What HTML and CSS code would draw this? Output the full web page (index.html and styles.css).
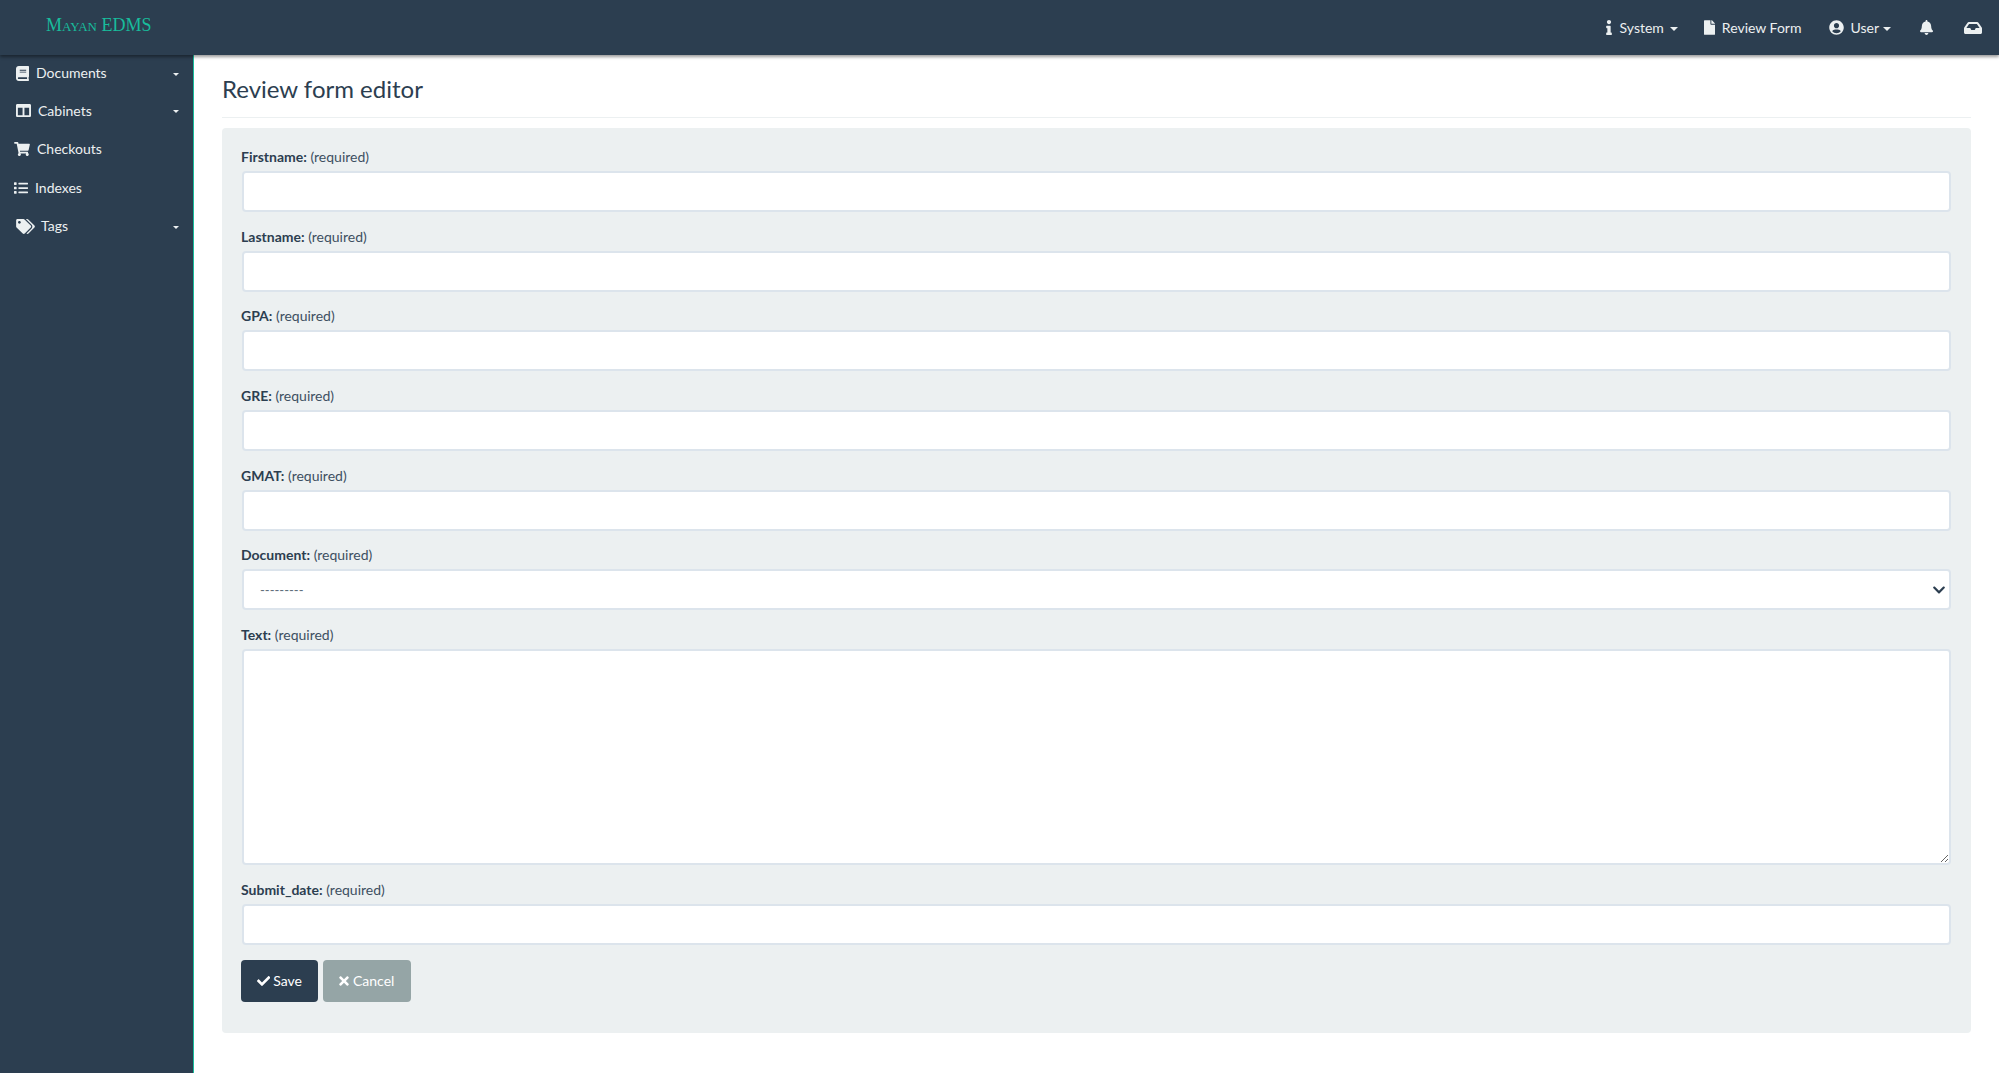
FILE: index.html
```html
<!DOCTYPE html>
<html lang="en">
<head>
    <meta charset="UTF-8">
    <meta name="viewport" content="width=device-width, initial-scale=1.0">
    <title>Review form editor</title>
    <link rel="stylesheet" href="styles.css">
</head>
<body>
    <nav class="navbar">
        <a class="brand">Mayan EDMS</a>
        <div class="nav-links">
            <a class="nav-link nav-system">
                <svg class="nav-icon icon-info" viewBox="0 0 192 512"><path d="M20 424.229h20V279.771H20c-11.046 0-20-8.954-20-20V212c0-11.046 8.954-20 20-20h112c11.046 0 20 8.954 20 20v212.229h20c11.046 0 20 8.954 20 20V492c0 11.046-8.954 20-20 20H20c-11.046 0-20-8.954-20-20v-47.771c0-11.046 8.954-20 20-20zM96 0C56.235 0 24 32.235 24 72s32.235 72 72 72 72-32.235 72-72S135.764 0 96 0z"/></svg>
                System <span class="caret"></span>
            </a>
            <a class="nav-link nav-review">
                <svg class="nav-icon icon-file" viewBox="0 0 384 512"><path d="M224 136V0H24C10.7 0 0 10.7 0 24v464c0 13.3 10.7 24 24 24h336c13.3 0 24-10.7 24-24V160H248c-13.2 0-24-10.8-24-24zm160-14.1v6.1H256V0h6.1c6.4 0 12.5 2.5 17 7l97.9 98c4.5 4.5 7 10.6 7 16.9z"/></svg>
                Review Form
            </a>
            <a class="nav-link nav-user">
                <svg class="nav-icon icon-user" viewBox="0 0 496 512"><path d="M248 8C111 8 0 119 0 256s111 248 248 248 248-111 248-248S385 8 248 8zm0 96c48.6 0 88 39.4 88 88s-39.4 88-88 88-88-39.4-88-88 39.4-88 88-88zm0 344c-58.7 0-111.3-26.6-146.5-68.2 18.8-35.4 55.6-59.8 98.5-59.8 2.4 0 4.8.4 7.1 1.1 13 4.2 26.6 6.9 40.9 6.9 14.3 0 28-2.7 40.9-6.9 2.3-.7 4.7-1.1 7.1-1.1 42.9 0 79.7 24.4 98.5 59.8C359.3 421.4 306.7 448 248 448z"/></svg>
                User <span class="caret"></span>
            </a>
            <a class="nav-link nav-bell">
                <svg class="nav-icon icon-bell" viewBox="0 0 448 512"><path d="M224 512c35.32 0 63.97-28.65 63.97-64H160.03c0 35.35 28.65 64 63.97 64zm215.39-149.71c-19.32-20.76-55.47-51.99-55.47-154.29 0-77.7-54.48-139.9-127.94-155.16V32c0-17.67-14.32-32-31.98-32s-31.98 14.33-31.98 32v20.84C118.56 68.1 64.08 130.3 64.08 208c0 102.3-36.15 133.53-55.47 154.29-6 6.45-8.66 14.16-8.61 21.71.11 16.4 12.98 32 32.1 32h383.8c19.12 0 32-15.6 32.1-32 .05-7.55-2.61-15.27-8.61-21.71z"/></svg>
            </a>
            <a class="nav-link nav-inbox">
                <svg class="nav-icon icon-inbox" viewBox="0 0 576 512"><path d="M567.938 243.908L462.25 85.374A48.003 48.003 0 0 0 422.311 64H153.689a48 48 0 0 0-39.938 21.374L8.062 243.908A47.994 47.994 0 0 0 0 270.533V400c0 26.51 21.49 48 48 48h480c26.51 0 48-21.49 48-48V270.533a47.994 47.994 0 0 0-8.062-26.625zM162.252 128h251.497l85.333 128H376l-32 64H232l-32-64H76.918l85.334-128z"/></svg>
            </a>
        </div>
    </nav>

    <div class="page">
        <aside class="sidebar">
            <a class="side-item">
                <svg class="side-icon icon-book" viewBox="0 0 448 512"><path d="M448 360V24c0-13.3-10.7-24-24-24H96C43 0 0 43 0 96v320c0 53 43 96 96 96h328c13.3 0 24-10.7 24-24v-16c0-7.5-3.5-14.3-8.9-18.7-4.2-15.4-4.2-59.3 0-74.7 5.4-4.3 8.9-11.1 8.9-18.6zM128 134c0-3.3 2.7-6 6-6h212c3.3 0 6 2.7 6 6v20c0 3.3-2.7 6-6 6H134c-3.3 0-6-2.7-6-6v-20zm0 64c0-3.3 2.7-6 6-6h212c3.3 0 6 2.7 6 6v20c0 3.3-2.7 6-6 6H134c-3.3 0-6-2.7-6-6v-20zm253.4 250H96c-17.7 0-32-14.3-32-32 0-17.6 14.4-32 32-32h285.4c-1.9 17.1-1.9 46.9 0 64z"/></svg>
                <span class="side-label">Documents</span>
                <span class="caret"></span>
            </a>
            <a class="side-item">
                <svg class="side-icon icon-columns" viewBox="0 0 512 512"><path d="M464 32H48C21.49 32 0 53.49 0 80v352c0 26.51 21.49 48 48 48h416c26.51 0 48-21.49 48-48V80c0-26.51-21.49-48-48-48zM224 416H64V160h160v256zm224 0H288V160h160v256z"/></svg>
                <span class="side-label">Cabinets</span>
                <span class="caret"></span>
            </a>
            <a class="side-item">
                <svg class="side-icon icon-cart" viewBox="0 0 576 512"><path d="M528.12 301.319l47.273-208C578.806 78.301 567.391 64 551.99 64H159.208l-9.166-44.81C147.758 8.021 137.93 0 126.529 0H24C10.745 0 0 10.745 0 24v16c0 13.255 10.745 24 24 24h69.883l70.248 343.435C147.325 417.1 136 435.222 136 456c0 30.928 25.072 56 56 56s56-25.072 56-56c0-15.674-6.447-29.835-16.824-40h209.647C430.447 426.165 424 440.326 424 456c0 30.928 25.072 56 56 56s56-25.072 56-56c0-22.172-12.888-41.332-31.579-50.405l5.517-24.276c3.413-15.018-8.002-29.319-23.403-29.319H218.117l-6.545-32h293.145c11.206 0 20.92-7.754 23.403-18.681z"/></svg>
                <span class="side-label">Checkouts</span>
            </a>
            <a class="side-item">
                <svg class="side-icon icon-list" viewBox="0 0 512 512"><path d="M80 368H16a16 16 0 0 0-16 16v64a16 16 0 0 0 16 16h64a16 16 0 0 0 16-16v-64a16 16 0 0 0-16-16zm0-320H16A16 16 0 0 0 0 64v64a16 16 0 0 0 16 16h64a16 16 0 0 0 16-16V64a16 16 0 0 0-16-16zm0 160H16a16 16 0 0 0-16 16v64a16 16 0 0 0 16 16h64a16 16 0 0 0 16-16v-64a16 16 0 0 0-16-16zm416 176H176a16 16 0 0 0-16 16v32a16 16 0 0 0 16 16h320a16 16 0 0 0 16-16v-32a16 16 0 0 0-16-16zm0-320H176a16 16 0 0 0-16 16v32a16 16 0 0 0 16 16h320a16 16 0 0 0 16-16V80a16 16 0 0 0-16-16zm0 160H176a16 16 0 0 0-16 16v32a16 16 0 0 0 16 16h320a16 16 0 0 0 16-16v-32a16 16 0 0 0-16-16z"/></svg>
                <span class="side-label">Indexes</span>
            </a>
            <a class="side-item">
                <svg class="side-icon icon-tags" viewBox="0 0 640 512"><path d="M497.941 225.941L286.059 14.059A48 48 0 0 0 252.118 0H48C21.49 0 0 21.49 0 48v204.118a48 48 0 0 0 14.059 33.941l211.882 211.882c18.744 18.745 49.136 18.746 67.882 0l204.118-204.118c18.745-18.745 18.745-49.137 0-67.882zM112 160c-26.51 0-48-21.49-48-48s21.49-48 48-48 48 21.49 48 48-21.49 48-48 48zm513.941 133.823L421.823 497.941c-18.745 18.745-49.137 18.745-67.882 0l-.36-.36L527.64 323.522c16.999-16.999 26.36-39.6 26.36-63.64s-9.362-46.641-26.36-63.64L331.397 0h48.721a48 48 0 0 1 33.941 14.059l211.882 211.882c18.745 18.745 18.745 49.137 0 67.882z"/></svg>
                <span class="side-label">Tags</span>
                <span class="caret"></span>
            </a>
        </aside>

        <main class="content">
            <h1 class="page-title">Review form editor</h1>

            <form class="well">
                <div class="form-group">
                    <label class="field-label"><b>Firstname:</b> (required)</label>
                    <input class="form-control" type="text">
                </div>
                <div class="form-group">
                    <label class="field-label"><b>Lastname:</b> (required)</label>
                    <input class="form-control" type="text">
                </div>
                <div class="form-group">
                    <label class="field-label"><b>GPA:</b> (required)</label>
                    <input class="form-control" type="text">
                </div>
                <div class="form-group">
                    <label class="field-label"><b>GRE:</b> (required)</label>
                    <input class="form-control" type="text">
                </div>
                <div class="form-group">
                    <label class="field-label"><b>GMAT:</b> (required)</label>
                    <input class="form-control" type="text">
                </div>
                <div class="form-group">
                    <label class="field-label"><b>Document:</b> (required)</label>
                    <div class="select-wrap">
                        <select class="form-control form-select">
                            <option>---------</option>
                        </select>
                        <svg class="select-arrow" viewBox="0 0 448 512"><path d="M207.029 381.476L12.686 187.132c-9.373-9.373-9.373-24.569 0-33.941l22.667-22.667c9.357-9.357 24.522-9.375 33.901-.04L224 284.505l154.745-154.021c9.379-9.335 24.544-9.317 33.901.04l22.667 22.667c9.373 9.373 9.373 24.569 0 33.941L240.971 381.476c-9.373 9.372-24.569 9.372-33.942 0z"/></svg>
                    </div>
                </div>
                <div class="form-group">
                    <label class="field-label"><b>Text:</b> (required)</label>
                    <textarea class="form-control form-text"></textarea>
                </div>
                <div class="form-group">
                    <label class="field-label"><b>Submit_date:</b> (required)</label>
                    <input class="form-control" type="text">
                </div>

                <div class="button-row">
                    <button type="button" class="btn btn-primary">
                        <svg class="btn-icon" viewBox="0 0 512 512"><path d="M173.898 439.404l-166.4-166.4c-9.997-9.997-9.997-26.206 0-36.204l36.203-36.204c9.997-9.998 26.207-9.998 36.204 0L192 312.69 432.095 72.596c9.997-9.997 26.207-9.997 36.204 0l36.203 36.204c9.997 9.997 9.997 26.206 0 36.204l-294.4 294.401c-9.998 9.997-26.207 9.997-36.204-.001z"/></svg>
                        Save
                    </button>
                    <button type="button" class="btn btn-default">
                        <svg class="btn-icon icon-times" viewBox="0 0 352 512"><path d="M242.72 256l100.07-100.07c12.28-12.28 12.28-32.19 0-44.48l-22.24-22.24c-12.28-12.28-32.19-12.28-44.48 0L176 189.28 75.93 89.21c-12.28-12.28-32.19-12.28-44.48 0L9.21 111.45c-12.28 12.28-12.28 32.19 0 44.48L109.28 256 9.21 356.07c-12.28 12.28-12.28 32.19 0 44.48l22.24 22.24c12.28 12.28 32.2 12.28 44.48 0L176 322.72l100.07 100.07c12.28 12.28 32.2 12.28 44.48 0l22.24-22.24c12.28-12.28 12.28-32.19 0-44.48L242.72 256z"/></svg>
                        Cancel
                    </button>
                </div>
            </form>
        </main>
    </div>
</body>
</html>
```

FILE: styles.css
```css
* {
    box-sizing: border-box;
}
body {
    font-family: Lato, "Open Sans", sans-serif;
    font-size: 14px;
    line-height: 20px;
    margin: 0;
    color: #2c3e50;
    background: #fff;
    height: 1073px;
    overflow: hidden;
}
.navbar {
    display: flex;
    align-items: center;
    justify-content: space-between;
    height: 55px;
    background: #2c3e50;
    box-shadow: 0 2px 3px rgba(0, 0, 0, 0.4);
    position: relative;
    z-index: 2;
}
.brand {
    font-family: "Liberation Serif", serif;
    font-variant: small-caps;
    font-size: 18px;
    color: #18bc9c;
    margin-left: 46px;
    margin-top: -6px;
}
.nav-links {
    display: flex;
    align-items: center;
    color: #ecf0f1;
    padding-right: 17px;
}
.nav-link {
    display: flex;
    align-items: center;
    gap: 6px;
}
.nav-system {
    gap: 8px;
}
.nav-system .caret,
.nav-user .caret {
    margin-left: -2px;
    border-top-width: 4px;
    border-left-width: 4px;
    border-right-width: 4px;
}
.nav-review {
    margin-left: 26px;
    gap: 7px;
}
.nav-user {
    margin-left: 28px;
}
.nav-bell {
    margin-left: 29px;
}
.nav-inbox {
    margin-left: 31px;
}
.nav-icon {
    fill: #ecf0f1;
    display: block;
}
.icon-info {
    width: 6px;
    height: 15px;
}
.icon-file {
    width: 11px;
    height: 15px;
}
.icon-user {
    width: 15px;
    height: 15px;
}
.icon-bell {
    width: 13px;
    height: 15px;
}
.icon-inbox {
    width: 18px;
    height: 16px;
}
.caret {
    display: inline-block;
    width: 0;
    height: 0;
    margin-top: 2px;
    border-top: 3.5px solid currentColor;
    border-left: 3.5px solid transparent;
    border-right: 3.5px solid transparent;
}
.page {
    display: flex;
    height: 1018px;
}
.sidebar {
    width: 194px;
    flex-shrink: 0;
    background: #2c3e50;
    border-right: 1px solid #18bc9c;
    color: #ecf0f1;
}
.side-item {
    display: flex;
    align-items: center;
    height: 38.5px;
    padding: 0 14px 0 16px;
    gap: 7px;
}
.side-item:first-child {
    height: 36.5px;
}
.side-label {
    flex: 1;
}
.side-icon {
    fill: #ecf0f1;
    flex-shrink: 0;
    display: block;
}
.icon-book {
    width: 13px;
    height: 15px;
}
.icon-columns {
    width: 15px;
    height: 15px;
}
.icon-cart {
    width: 16px;
    height: 14px;
    margin-left: -2px;
}
.icon-list {
    width: 14px;
    height: 14px;
    margin-left: -2px;
}
.icon-tags {
    width: 19px;
    height: 15px;
    margin-right: -1px;
}
.content {
    flex: 1;
    padding: 0 28px;
    min-width: 0;
}
.page-title {
    font-size: 24px;
    font-weight: 400;
    line-height: 30px;
    margin: 19px 0 0;
    padding-bottom: 13px;
    border-bottom: 1px solid #ecf0f1;
}
.well {
    background: #ecf0f1;
    border-radius: 4px;
    margin-top: 10px;
    padding: 19px 20px 31px 19px;
}
.form-group {
    margin-bottom: 14.7px;
}
.field-label {
    display: block;
    margin-bottom: 4px;
    color: #3d4f61;
}
.field-label b {
    color: #2c3e50;
}
.form-control {
    display: block;
    height: 41px;
    margin-left: 1px;
    width: calc(100% - 1px);
    padding: 8px 15px;
    font-family: Lato, sans-serif;
    font-size: 14px;
    color: #2c3e50;
    background: #fff;
    border: 2px solid #dce4ec;
    border-radius: 4px;
    outline: none;
}
.select-wrap {
    position: relative;
}
.form-select {
    appearance: none;
    padding-left: 16px;
    font-size: 13px;
    color: #5f6e7c;
}
.select-arrow {
    position: absolute;
    right: 5px;
    top: 14px;
    width: 14px;
    height: 14px;
    fill: #2c3e50;
    pointer-events: none;
}
.form-text {
    height: 216px;
    resize: vertical;
}
.button-row {
    display: flex;
    gap: 5px;
}
.btn {
    display: flex;
    align-items: center;
    gap: 3px;
    height: 42px;
    padding: 0 15px;
    font-family: Lato, sans-serif;
    font-size: 14px;
    color: #fff;
    border: 1px solid transparent;
    border-radius: 4px;
}
.btn-primary {
    background: #2c3e50;
    width: 77px;
}
.btn-default {
    background: #95a5a6;
    width: 88px;
    gap: 4px;
}
.btn-icon {
    width: 14px;
    height: 14px;
    fill: #fff;
}
.icon-times {
    width: 10px;
}
```
